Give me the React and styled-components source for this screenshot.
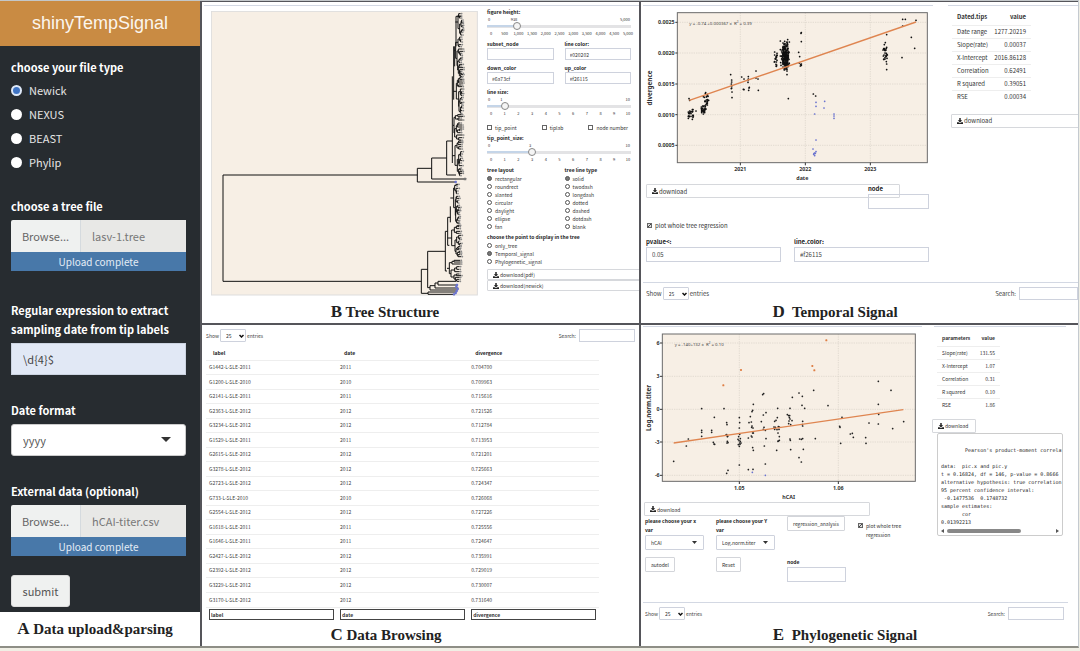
import React, { useState } from 'react';
import styled, { createGlobalStyle } from 'styled-components';

const uiFont = '"Noto Sans CJK SC", "Noto Sans", sans-serif';
const monoFont = '"DejaVu Sans Mono", monospace';

// small seeded generator so the dense parts of the plots are the same on each render
function makeRandom(seed) {
  let s = seed;
  return () => {
    s = (s * 16807) % 2147483647;
    return s / 2147483647;
  };
}

function cloud(seed, count, x0, x1, y0, y1) {
  const rnd = makeRandom(seed);
  return Array.from({ length: count }, () => [
    Math.round(x0 + rnd() * (x1 - x0)),
    Math.round(y0 + ((rnd() + rnd()) / 2) * (y1 - y0)),
  ]);
}

const temporalPoints = [
  ...cloud(11, 26, 145, 160, 318, 366),
  ...cloud(23, 26, 184, 196, 315, 346),
  ...cloud(37, 26, 192, 206, 276, 338),
  ...cloud(41, 20, 403, 411, 148, 204),
  ...cloud(59, 150, 429, 444, 120, 216),
  ...cloud(61, 60, 421, 448, 118, 210),
  ...cloud(73, 26, 729, 742, 132, 180),
  [147, 296], [149, 301], [168, 333], [190, 290], [197, 278], [272, 224], [275, 240], [275, 246], [274, 252],
  [275, 258], [275, 264], [274, 266], [276, 276], [276, 293], [305, 231], [312, 237], [310, 268], [312, 269],
  [325, 230], [325, 237], [324, 241], [324, 247], [328, 262], [326, 271], [348, 213], [348, 234], [354, 237],
  [355, 271], [327, 264], [441, 224], [445, 296], [484, 98], [483, 100], [484, 125], [476, 157], [479, 170],
  [478, 189], [482, 194], [484, 196], [481, 198], [484, 192], [520, 282], [527, 288], [740, 104], [736, 128],
  [739, 185], [740, 192], [740, 209], [788, 58], [796, 58], [788, 78], [828, 61], [814, 112], [824, 145], [786, 173],
];

const outlierPoints = [
  [528, 307], [554, 304], [528, 319], [552, 324], [524, 342], [582, 342], [582, 348], [582, 355], [528, 420],
  [519, 447], [528, 455], [524, 459], [521, 463], [524, 467], [526, 460], [522, 461],
];

const signalPoints = [
  [101, 412], [139, 366], [145, 345], [185, 254], [185, 319], [185, 325], [185, 337], [215, 319], [215, 325],
  [223, 280], [220, 355], [222, 360], [224, 361], [252, 254], [260, 296], [261, 302], [260, 332], [263, 337],
  [262, 352], [261, 357], [264, 356], [258, 333], [262, 338], [260, 448], [264, 439], [298, 281], [299, 296],
  [298, 312], [299, 331], [296, 338], [301, 344], [297, 350], [294, 346], [301, 352], [299, 357], [295, 362],
  [300, 361], [303, 357], [298, 367], [298, 423], [331, 278], [327, 296], [334, 294], [336, 263], [338, 259],
  [340, 241], [336, 306], [339, 312], [335, 310], [340, 327], [338, 327], [334, 336], [336, 339], [325, 342],
  [338, 371], [340, 379], [325, 437], [339, 436], [364, 293], [370, 273], [378, 266], [368, 212], [371, 209],
  [372, 310], [370, 316], [376, 319], [378, 344], [373, 366], [376, 420], [413, 253], [412, 281], [404, 292],
  [408, 289], [402, 309], [406, 310], [404, 316], [411, 317], [415, 308], [418, 309], [417, 316], [414, 327],
  [418, 338], [415, 351], [418, 349], [414, 352], [410, 379], [450, 253], [457, 220], [442, 272], [446, 275],
  [449, 275], [448, 281], [450, 285], [447, 291], [456, 290], [446, 299], [452, 302], [450, 345], [451, 349],
  [452, 377], [477, 207], [487, 217], [486, 244], [494, 253], [488, 292], [487, 302], [488, 306], [479, 345],
  [484, 346], [488, 344], [490, 376], [477, 401], [484, 414], [521, 199], [526, 344], [564, 245], [599, 307],
  [600, 310], [606, 280], [602, 358], [631, 330], [637, 328], [640, 340], [677, 341], [678, 358], [687, 297],
  [715, 172], [715, 241], [716, 271], [715, 300], [753, 199], [758, 314], [791, 293],
];

// phylogeny
function buildClade(seed, root, y0, y1, tipX) {
  const rnd = makeRandom(seed);
  const lines = [];
  const tips = [];
  const walk = (x, a, b) => {
    if (b - a < 9) {
      const y = Math.round((a + b) / 2);
      const end = Math.max(Math.round(tipX(y) - 4 - rnd() * 9), x + 1);
      lines.push(`M${x} ${y}H${end}`);
      tips.push([end + 3, y]);
      return y;
    }
    const cut = a + (b - a) * (0.28 + rnd() * 0.44);
    const left = tipX(a) - x;
    const next = Math.round(x + Math.max(1, left * (0.06 + rnd() * 0.26)));
    const top = walk(next, a, cut);
    const bottom = walk(next, cut, b);
    lines.push(`M${next} ${top}V${bottom}`);
    const mid = Math.round((top + bottom) / 2);
    lines.push(`M${x} ${mid}H${next}`);
    return mid;
  };
  walk(root, y0, y1);
  return { d: lines.join(''), tips };
}

const clades = [
  buildClade(7, 766, 38, 110, () => 793),
  buildClade(17, 763, 108, 235, () => 793),
  buildClade(29, 760, 232, 345, () => 793),
  buildClade(31, 759, 342, 425, () => 793),
  buildClade(43, 757, 422, 532, () => 791),
  buildClade(53, 751, 552, 675, (y) => 782 + (y - 552) / 40),
  buildClade(67, 743, 675, 775, () => 788),
  buildClade(71, 741, 778, 848, () => 788),
];

const trunk =
  'M69 526V845M69 526H652M69 845H664M652 506V547M652 506H695M652 547H766M695 475V538M695 475H740M695 538H792' +
  'M740 424V526M740 424H757M740 526H768M757 230V490M761 140V300M764 140V200M768 50V140M768 50H785' +
  'M664 809V881M664 809H683M664 881H684M683 755V864M683 755H736M683 864H690M684 877V884M684 877H768M684 884H764' +
  'M690 858V871M690 858H705M690 871H772M705 850V865M705 850H714M705 865H775M714 845V856M714 845H768M714 856H768' +
  'M736 695V814M736 695H743M736 814H741M743 653V737M743 653H751M743 737H748M751 620V668';

const tableRows = [
  ['G1442-L-SLE-2011', '2011', '0.704700'],
  ['G1200-L-SLE-2010', '2010', '0.709963'],
  ['G2141-L-SLE-2011', '2011', '0.715616'],
  ['G2363-L-SLE-2012', '2012', '0.721526'],
  ['G3234-L-SLE-2012', '2012', '0.712784'],
  ['G1529-L-SLE-2011', '2011', '0.713953'],
  ['G2615-L-SLE-2012', '2012', '0.721201'],
  ['G3278-L-SLE-2012', '2012', '0.725663'],
  ['G2723-L-SLE-2012', '2012', '0.724347'],
  ['G733-L-SLE-2010', '2010', '0.726068'],
  ['G2554-L-SLE-2012', '2012', '0.727226'],
  ['G1618-L-SLE-2011', '2011', '0.725556'],
  ['G1646-L-SLE-2011', '2011', '0.724647'],
  ['G2427-L-SLE-2012', '2012', '0.735991'],
  ['G2392-L-SLE-2012', '2012', '0.729019'],
  ['G3229-L-SLE-2012', '2012', '0.730007'],
  ['G3170-L-SLE-2012', '2012', '0.731640'],
];

const temporalStats = [
  ['Date range', '1277.20219'],
  ['Slope(rate)', '0.00037'],
  ['X-Intercept', '2016.86128'],
  ['Correlation', '0.62491'],
  ['R squared', '0.39051'],
  ['RSE', '0.00034'],
];

const signalStats = [
  ['Slope(rate)', '131.55'],
  ['X-Intercept', '1.07'],
  ['Correlation', '0.31'],
  ['R squared', '0.10'],
  ['RSE', '1.86'],
];

const testOutput = `
        Pearson's product-moment correlation

data:  pic.x and pic.y
t = 0.16824, df = 146, p-value = 0.8666
alternative hypothesis: true correlation is
95 percent confidence interval:
 -0.1477536  0.1748732
sample estimates:
       cor
0.01392213`;

function DownloadIcon() {
  return (
    <svg width="6" height="6" viewBox="0 0 16 16" aria-hidden="true">
      <path d="M6 0h4v6h4L8 12 2 6h4zM0 11h4l4 3 4-3h4v5H0z" fill="#222" />
    </svg>
  );
}

function DownloadButton({ label = 'download', ...props }) {
  return (
    <Download type="button" {...props}>
      <DownloadIcon />
      {label}
    </Download>
  );
}

function Slider({ id, label, max, start, ticks, maxLabel }) {
  const [value, setValue] = useState(start);
  const percent = (value / max) * 100;
  return (
    <SliderBox>
      <SmallLabel htmlFor={id}>{label}</SmallLabel>
      <SliderNumbers>
        <span>0</span>
        <SliderValue style={{ left: `${percent}%` }}>{value}</SliderValue>
        <span>{maxLabel}</span>
      </SliderNumbers>
      <Range
        id={id}
        type="range"
        min="0"
        max={max}
        value={value}
        onChange={(e) => setValue(Number(e.target.value))}
        style={{ backgroundSize: `${percent}% 2px, 100% 3px` }}
      />
      <Ticks>
        {ticks.map((tick) => (
          <span key={tick}>{tick}</span>
        ))}
      </Ticks>
    </SliderBox>
  );
}

function RadioList({ title, name, options, initial }) {
  const [picked, setPicked] = useState(initial);
  return (
    <PlainFieldset>
      <SmallLegend>{title}</SmallLegend>
      {options.map((option) => (
        <TinyChoice key={option}>
          <TinyRadio type="radio" name={name} checked={picked === option} onChange={() => setPicked(option)} />
          {option}
        </TinyChoice>
      ))}
    </PlainFieldset>
  );
}

function TinyField({ id, label, value = '' }) {
  return (
    <Field>
      <SmallLabel htmlFor={id}>{label}</SmallLabel>
      <TinyInput id={id} defaultValue={value} />
    </Field>
  );
}

function FormField({ id, label, value = '', small }) {
  return (
    <Field>
      <FormLabel htmlFor={id} $small={small}>{label}</FormLabel>
      <FormInput id={id} defaultValue={value} />
    </Field>
  );
}

function TableTools({ name, left = 4, right = 0, large }) {
  return (
    <Tools $left={left} $right={right} $large={large}>
      <Entries>
        Show
        <Picker $small>
          <select aria-label={`${name} entries`} defaultValue="25">
            <option>10</option>
            <option>25</option>
            <option>50</option>
          </select>
          <svg width="5" height="4" viewBox="0 0 10 8" aria-hidden="true">
            <path d="M1 2l4 4 4-4" fill="none" stroke="#111" strokeWidth="3" />
          </svg>
        </Picker>
        entries
      </Entries>
      <Entries $search>
        Search:
        <SearchInput type="search" aria-label={`${name} search`} $large={large} />
      </Entries>
    </Tools>
  );
}

function Stats({ head, rows, small }) {
  return (
    <StatsTable $small={small}>
      <thead>
        <tr>
          <th>{head}</th>
          <th>value</th>
        </tr>
      </thead>
      <tbody>
        {rows.map(([name, value]) => (
          <tr key={name}>
            <td>{name}</td>
            <td>{value}</td>
          </tr>
        ))}
      </tbody>
    </StatsTable>
  );
}

function Dots({ points, color, size = 5 }) {
  return (
    <g fill={color}>
      {points.map(([x, y], i) => (
        <rect key={i} x={x - size / 2} y={y - size / 2} width={size} height={size} rx="2" />
      ))}
    </g>
  );
}

function TreeChart() {
  return (
    <svg width="267" height="285" viewBox="33 34 801 855" role="img" aria-label="phylogenetic tree">
      <rect x="34" y="35" width="798" height="851" fill="#f7efe5" stroke="#dddddd" strokeWidth="3" />
      <path d={trunk} fill="none" stroke="#111" strokeWidth="3" />
      <g fill="none" stroke="#111" strokeWidth="3">
        {clades.map((clade, i) => (
          <path key={i} d={clade.d} />
        ))}
      </g>
      {clades.map((clade, i) => (
        <Dots key={i} points={clade.tips} color="#8a8a8a" size={5} />
      ))}
      <Dots points={[[795, 538]]} color="#777" size={8} />
      <Dots
        points={[[767, 547], [771, 856], [769, 862], [773, 868], [770, 874], [767, 880], [762, 884]]}
        color="#6a73cf"
        size={7}
      />
    </svg>
  );
}

function TemporalChart() {
  return (
    <svg width="290" height="174" viewBox="9 27 870 522" role="img" aria-label="divergence by date">
      <rect x="112" y="38" width="750" height="450" fill="#f7efe5" />
      <g stroke="#d9d2c8" strokeWidth="2" strokeDasharray="4 3">
        {[67, 159, 252, 344, 436].map((y) => (
          <line key={y} x1="112" x2="862" y1={y} y2={y} />
        ))}
        {[301, 496, 691].map((x) => (
          <line key={x} x1={x} x2={x} y1="38" y2="488" />
        ))}
      </g>
      <Dots points={temporalPoints} color="#111" />
      <Dots points={outlierPoints} color="#6a73cf" />
      <line x1="148" y1="301" x2="828" y2="66" stroke="#df8550" strokeWidth="4" />
      <rect x="112" y="38" width="750" height="450" fill="none" stroke="#6b6b6b" strokeWidth="3" />
      <AxisText textAnchor="end">
        {[['0.0025', 67], ['0.0020', 159], ['0.0015', 252], ['0.0010', 344], ['0.0005', 436]].map(([t, y]) => (
          <text key={t} x="104" y={y + 6}>{t}</text>
        ))}
      </AxisText>
      <AxisText textAnchor="middle">
        {[['2021', 301], ['2022', 496], ['2023', 691]].map(([t, x]) => (
          <text key={t} x={x} y="514">{t}</text>
        ))}
        <text x="487" y="540">date</text>
        <SideTitle transform="translate(37 264) rotate(-90)">divergence</SideTitle>
      </AxisText>
      <path
        d="M106 67h6M106 159h6M106 252h6M106 344h6M106 436h6M301 488v8M496 488v8M691 488v8"
        stroke="#333"
        strokeWidth="3"
      />
      <Formula x="148" y="75">
        y = -0.74 +0.000367 x &#160;R<tspan dy="-6" fontSize="9">2</tspan><tspan dy="6"> = 0.39</tspan>
      </Formula>
    </svg>
  );
}

function SignalChart() {
  return (
    <svg width="278" height="174" viewBox="12 12 834 522" role="img" aria-label="Log.norm.titer by hCAI">
      <rect x="67" y="30" width="759" height="442" fill="#f7efe5" />
      <g stroke="#d9d2c8" strokeWidth="2" strokeDasharray="4 3">
        {[57, 157, 256, 354, 454].map((y) => (
          <line key={y} x1="67" x2="826" y1={y} y2={y} />
        ))}
        {[298, 595].map((x) => (
          <line key={x} x1={x} x2={x} y1="30" y2="472" />
        ))}
      </g>
      <Dots points={signalPoints} color="#222" />
      <Dots points={[[303, 138], [250, 184], [517, 126], [523, 139], [559, 49]]} color="#df7f45" size={6} />
      <Dots points={[[337, 445], [376, 454]]} color="#6a73cf" />
      <line x1="101" y1="357" x2="790" y2="257" stroke="#df8550" strokeWidth="4" />
      <rect x="67" y="30" width="759" height="442" fill="none" stroke="#6b6b6b" strokeWidth="3" />
      <AxisText textAnchor="end">
        {[['6', 57], ['3', 157], ['0', 256], ['-3', 354], ['-6', 454]].map(([t, y]) => (
          <text key={t} x="59" y={y + 6}>{t}</text>
        ))}
      </AxisText>
      <AxisText textAnchor="middle">
        <text x="298" y="498">1.05</text>
        <text x="595" y="498">1.06</text>
        <text x="446" y="524">hCAI</text>
        <SideTitle transform="translate(34 252) rotate(-90)">Log.norm.titer</SideTitle>
      </AxisText>
      <path d="M60 57h7M60 157h7M60 256h7M60 354h7M60 454h7M298 472v8M595 472v8" stroke="#333" strokeWidth="3" />
      <Formula x="104" y="66">
        y = -140+132 x &#160;R<tspan dy="-6" fontSize="9">2</tspan><tspan dy="6"> = 0.10</tspan>
      </Formula>
    </svg>
  );
}

function FilePicker({ id, label, file, gap }) {
  return (
    <Group $gap={gap}>
      <SideLabel htmlFor={id}>{label}</SideLabel>
      <FileRow>
        <Browse type="button">Browse...</Browse>
        <FileName id={id} value={file} readOnly />
      </FileRow>
      <Progress>Upload complete</Progress>
    </Group>
  );
}

function Sidebar() {
  const [type, setType] = useState('Newick');
  return (
    <Side>
      <Brand>shinyTempSignal</Brand>
      <SideForm onSubmit={(e) => e.preventDefault()}>
        <PlainFieldset>
          <SideLegend>choose your file type</SideLegend>
          {['Newick', 'NEXUS', 'BEAST', 'Phylip'].map((name) => (
            <Choice key={name}>
              <Radio type="radio" name="filetype" checked={type === name} onChange={() => setType(name)} />
              {name}
            </Choice>
          ))}
        </PlainFieldset>
        <FilePicker id="treefile" label="choose a tree file" file="lasv-1.tree" gap={23} />
        <Group $gap={30}>
          <SideLabel htmlFor="regexp">Regular expression to extract sampling date from tip labels</SideLabel>
          <SideInput id="regexp" defaultValue="\d{4}$" />
        </Group>
        <Group $gap={26}>
          <SideLabel htmlFor="format">Date format</SideLabel>
          <SidePicker>
            <select id="format" defaultValue="yyyy">
              <option>yyyy</option>
              <option>yyyy-mm-dd</option>
            </select>
            <svg width="10" height="6" viewBox="0 0 10 6" aria-hidden="true">
              <path d="M0 0h10L5 5z" fill="#333" />
            </svg>
          </SidePicker>
        </Group>
        <FilePicker id="external" label="External data (optional)" file="hCAI-titer.csv" gap={26} />
        <Submit type="submit">submit</Submit>
      </SideForm>
      <Caption $shift={10} $tall>
        <b>A</b> Data upload&amp;parsing
      </Caption>
    </Side>
  );
}

const unit = ['0', '1', '2', '3', '4', '5', '6', '7', '8', '9', '10'];
const heights = ['0', '500', '1,000', '1,500', '2,000', '2,500', '3,000', '3,500', '4,000', '4,500', '5,000'];

function TreePanel() {
  return (
    <Panel $top={3}>
      <Rule />
      <TreeBody>
        <Figure>
          <TreeChart />
        </Figure>
        <Controls>
          <Slider id="height" label="figure height:" max={5000} start={938} ticks={heights} maxLabel="5,000" />
          <Pair>
            <TinyField id="subset" label="subset_node" />
            <TinyField id="linecolor" label="line color:" value="#020202" />
            <TinyField id="down" label="down_color" value="#6a73cf" />
            <TinyField id="up" label="up_color" value="#f26115" />
          </Pair>
          <Slider id="linesize" label="line size:" max={10} start={1} ticks={unit} maxLabel="10" />
          <Checks>
            {['tip_point', 'tiplab', 'node number'].map((name) => (
              <TinyChoice key={name}>
                <TinyCheck type="checkbox" />
                {name}
              </TinyChoice>
            ))}
          </Checks>
          <Slider id="pointsize" label="tip_point_size:" max={10} start={3} ticks={unit} maxLabel="10" />
          <Pair $spaced>
            <RadioList
              title="tree layout"
              name="layout"
              initial="rectangular"
              options={['rectangular', 'roundrect', 'slanted', 'circular', 'daylight', 'ellipse', 'fan']}
            />
            <RadioList
              title="tree line type"
              name="linetype"
              initial="solid"
              options={['solid', 'twodash', 'longdash', 'dotted', 'dashed', 'dotdash', 'blank']}
            />
          </Pair>
          <RadioList
            title="choose the point to display in the tree"
            name="points"
            initial="Temporal_signal"
            options={['only_tree', 'Temporal_signal', 'Phylogenetic_signal']}
          />
          <Downloads>
            <DownloadButton label="download(pdf)" $flat />
            <DownloadButton label="download(newick)" $flat />
          </Downloads>
        </Controls>
      </TreeBody>
      <Caption $shift={71}>
        <b>B</b> Tree Structure
      </Caption>
    </Panel>
  );
}

function TemporalPanel() {
  return (
    <Panel $top={3}>
      <Split>
        <Rule />
        <Rule />
        <Main>
          <TemporalChart />
          <NodeRow>
            <DownloadButton />
            <NodeField>
              <FormLabel htmlFor="node-d">node</FormLabel>
              <FormInput id="node-d" />
            </NodeField>
          </NodeRow>
          <FormCheck>
            <TinyCheck type="checkbox" defaultChecked />
            plot whole tree regression
          </FormCheck>
          <FormPair>
            <FormField id="pvalue" label="pvalue<:" value="0.05" />
            <FormField id="line-color-d" label="line.color:" value="#f26115" />
          </FormPair>
        </Main>
        <Aside>
          <Stats head="Dated.tips" rows={temporalStats} />
          <DownloadButton $bleed />
        </Aside>
      </Split>
      <Rule />
      <TableTools name="temporal" left={5} large />
      <Caption $shift={49}>
        <b>D</b>&nbsp; Temporal Signal
      </Caption>
    </Panel>
  );
}

function DataPanel() {
  return (
    <Panel>
      <TableTools name="data" right={4} />
      <DataTable>
        <thead>
          <tr>
            <th>label</th>
            <th>date</th>
            <th>divergence</th>
          </tr>
        </thead>
        <tbody>
          {tableRows.map((row) => (
            <tr key={row[0]}>
              {row.map((cell) => (
                <td key={cell}>{cell}</td>
              ))}
            </tr>
          ))}
        </tbody>
        <tfoot>
          <tr>
            {['label', 'date', 'divergence'].map((name) => (
              <td key={name}>
                <FilterInput placeholder={name} aria-label={`filter ${name}`} />
              </td>
            ))}
          </tr>
        </tfoot>
      </DataTable>
      <Caption $shift={69}>
        <b>C</b> Data Browsing
      </Caption>
    </Panel>
  );
}

function VarPicker({ id, label, value }) {
  return (
    <Field>
      <FormLabel htmlFor={id} $small>{label}</FormLabel>
      <Picker>
        <select id={id} defaultValue={value}>
          <option>{value}</option>
        </select>
        <svg width="5" height="3" viewBox="0 0 10 6" aria-hidden="true">
          <path d="M0 0h10L5 6z" fill="#333" />
        </svg>
      </Picker>
    </Field>
  );
}

function SignalPanel() {
  return (
    <Panel $top={1}>
      <Split $narrow>
        <Rule />
        <Rule />
        <Main $narrow>
          <SignalChart />
          <DownloadButton $wide />
          <SignalForm>
            <FormColumn>
              <VarPicker id="xvar" label="please choose your x var" value="hCAI" />
              <FormButton type="button">autodel</FormButton>
            </FormColumn>
            <FormColumn>
              <VarPicker id="yvar" label="please choose your Y var" value="Log.norm.titer" />
              <FormButton type="button">Reset</FormButton>
            </FormColumn>
            <FormColumn $spread>
              <FormButton type="button">regression_analysis</FormButton>
              <FormField id="node-e" label="node" small />
            </FormColumn>
            <FormCheck $wrap>
              <TinyCheck type="checkbox" defaultChecked />
              plot whole tree regression
            </FormCheck>
          </SignalForm>
        </Main>
        <Aside $narrow>
          <Stats head="parameters" rows={signalStats} small />
          <DownloadButton $short />
          <Output>
            <pre>{testOutput}</pre>
            <ScrollBar aria-hidden="true">
              <svg width="3" height="4" viewBox="0 0 3 4"><path d="M3 0v4L0 2z" fill="#555" /></svg>
              <ScrollTrack>
                <ScrollThumb />
              </ScrollTrack>
              <svg width="3" height="4" viewBox="0 0 3 4"><path d="M0 0v4l3-2z" fill="#555" /></svg>
            </ScrollBar>
          </Output>
        </Aside>
      </Split>
      <Rule $inset />
      <TableTools name="signal" right={14} />
      <Caption $shift={29}>
        <b>E</b>&nbsp; Phylogenetic Signal
      </Caption>
    </Panel>
  );
}

function App() {
  return (
    <>
      <GlobalStyle />
      <Page>
        <Sidebar />
        <Panels>
          <TreePanel />
          <TemporalPanel />
          <DataPanel />
          <SignalPanel />
        </Panels>
      </Page>
    </>
  );
}

const GlobalStyle = createGlobalStyle`
  * {
    box-sizing: border-box;
  }

  body {
    margin: 0;
    background: #f0efe5;
    font-family: ${uiFont};
    color: #333;
  }

  button, input, select {
    font-family: inherit;
    margin: 0;
  }

  svg {
    display: block;
    flex: none;
  }
`;

const Page = styled.div`
  display: grid;
  grid-template-columns: 200px minmax(0, 1fr);
  margin-right: 1px;
  border-top: 1px solid #c3c7c9;
  border-right: 1px solid #c4cad0;
  border-bottom: 2px solid #8e8e86;
  background: #fff;
`;

const Panels = styled.main`
  display: grid;
  grid-template-columns: repeat(2, minmax(0, 1fr));
  grid-template-rows: repeat(2, minmax(321px, auto));
  gap: 2px;
  padding-top: 1px;
  padding-left: 2px;
  background: #55555a;
`;

const Panel = styled.section`
  display: flex;
  flex-direction: column;
  min-width: 0;
  padding-top: ${(p) => p.$top || 0}px;
  background: #fff;
  overflow: hidden;
`;

const Caption = styled.h2`
  margin: auto 0 0;
  padding-right: ${(p) => p.$shift}px;
  background: #fff;
  color: #222;
  font: bold 15px/${(p) => (p.$tall ? 34 : 21)}px "Liberation Serif", serif;
  text-align: center;
  white-space: nowrap;

  b {
    font-size: 17px;
  }
`;

const Rule = styled.hr`
  width: auto;
  height: 1px;
  margin: 0 ${(p) => (p.$inset ? 10 : 0)}px 0 2px;
  border: 0;
  background: #d3d8e3;
`;

const Side = styled.aside`
  display: flex;
  flex-direction: column;
  background: #272c30;
`;

const Brand = styled.h1`
  margin: 0;
  background: #c98b43;
  color: #fbf6ee;
  font: normal 18px/45px "Liberation Sans", sans-serif;
  text-align: center;
`;

const SideForm = styled.form`
  display: flex;
  flex-direction: column;
  align-items: stretch;
  padding: 12px 14px 5px 11px;
`;

const PlainFieldset = styled.fieldset`
  min-width: 0;
  margin: 0;
  padding: 0;
  border: 0;
`;

const SideLegend = styled.legend`
  padding: 0;
  color: #fff;
  font-size: 11px;
  font-weight: bold;
  line-height: 19px;
  margin-bottom: 1px;
`;

const SideLabel = styled.label`
  display: block;
  margin-bottom: 4px;
  color: #fff;
  font-size: 11px;
  font-weight: bold;
  line-height: 19px;
`;

const Choice = styled.label`
  display: flex;
  align-items: center;
  gap: 7px;
  height: 24px;
  color: #e6e6e6;
  font-size: 11px;
`;

const Radio = styled.input`
  appearance: none;
  width: 11px;
  height: 11px;
  border-radius: 50%;
  background: #fff;

  &:checked {
    border: 2px solid #dfe9f8;
    background: #3f74c4;
  }
`;

const Group = styled.div`
  display: flex;
  flex-direction: column;
  margin-top: ${(p) => p.$gap}px;
`;

const FileRow = styled.div`
  display: flex;
  height: 32px;
`;

const Browse = styled.button`
  flex: none;
  width: 70px;
  padding: 0;
  border: 0;
  border-right: 1px solid #d5dade;
  border-radius: 2px 0 0 0;
  background: #eff1f0;
  color: #666;
  font-size: 11px;
`;

const FileName = styled.input`
  flex: 1;
  min-width: 0;
  padding: 0 11px;
  border: 0;
  background: #e8e8e6;
  color: #777;
  font-size: 11px;
`;

const Progress = styled.div`
  background: #4878a9;
  color: #e4ecf5;
  font-size: 10px;
  line-height: 19px;
  text-align: center;
`;

const SideInput = styled.input`
  height: 32px;
  padding: 0 11px;
  border: 1px solid #cbd3e0;
  background: #e1e8f5;
  color: #444;
  font-size: 11px;
`;

const SidePicker = styled.div`
  display: grid;
  align-items: center;

  > * {
    grid-area: 1 / 1;
  }

  select {
    appearance: none;
    height: 32px;
    padding: 0 11px;
    border: 1px solid #ccc;
    border-radius: 3px;
    background: #fff;
    color: #555;
    font-size: 11px;
  }

  svg {
    justify-self: end;
    margin-right: 15px;
    pointer-events: none;
  }
`;

const Submit = styled.button`
  align-self: flex-start;
  width: 59px;
  height: 32px;
  padding: 0;
  margin-top: 19px;
  border: 1px solid #ddd;
  border-radius: 3px;
  background: #eff1f0;
  color: #555;
  font-size: 11px;
`;

const TreeBody = styled.div`
  display: flex;
  gap: 9px;
  padding: 2px 8px 0 9px;
`;

const Figure = styled.div`
  padding-top: 3px;
`;

const Controls = styled.div`
  flex: 1;
  min-width: 0;
`;

const SmallLabel = styled.label`
  display: block;
  color: #222;
  font-size: 5px;
  font-weight: bold;
  line-height: 8px;
`;

const SmallLegend = styled.legend`
  padding: 0;
  color: #222;
  font-size: 5px;
  font-weight: bold;
  line-height: 8px;
`;

const SliderBox = styled.div`
  padding-bottom: 4px;
`;

const SliderNumbers = styled.div`
  position: relative;
  display: flex;
  justify-content: space-between;
  padding: 0 1px;
  font-size: 4px;
  line-height: 6px;
`;

const SliderValue = styled.span`
  position: absolute;
  transform: translateX(-50%);
`;

const Range = styled.input`
  appearance: none;
  display: block;
  width: 100%;
  height: 8px;
  background:
    linear-gradient(#c5d5e8, #c5d5e8) left center no-repeat,
    linear-gradient(#e3e3e5, #e3e3e5) left center no-repeat;

  &::-webkit-slider-thumb {
    appearance: none;
    width: 8px;
    height: 8px;
    border: 1px solid #888;
    border-radius: 50%;
    background: #f5f5f5;
  }
`;

const Ticks = styled.div`
  display: flex;
  justify-content: space-between;
  padding: 0 3px 0 4px;
  font-size: 4px;
  line-height: 6px;

  span {
    display: flex;
    justify-content: center;
    width: 0;
  }
`;

const Pair = styled.div`
  display: grid;
  grid-template-columns: 1fr 1fr;
  column-gap: 11px;
  padding-bottom: ${(p) => (p.$spaced ? 3 : 0)}px;
`;

const Field = styled.div`
  display: flex;
  flex-direction: column;
  min-width: 0;
  padding-bottom: 4px;
`;

const TinyInput = styled.input`
  width: 100%;
  height: 12px;
  padding: 0 4px;
  border: 1px solid #ced2dd;
  color: #333;
  font-size: 5px;
`;

const TinyChoice = styled.label`
  display: flex;
  align-items: center;
  gap: 3px;
  height: 8px;
  color: #333;
  font-size: 5px;
  white-space: nowrap;
`;

const TinyRadio = styled.input`
  appearance: none;
  flex: none;
  width: 5px;
  height: 5px;
  border: 1px solid #555;
  border-radius: 50%;

  &:checked {
    background: #777;
  }
`;

const TinyCheck = styled.input`
  appearance: none;
  flex: none;
  width: 5px;
  height: 5px;
  border: 1px solid #666;

  &:checked {
    background: linear-gradient(135deg, #ddd 40%, #444 40%, #444 60%, #ddd 60%);
  }
`;

const Checks = styled.div`
  display: flex;
  justify-content: space-between;
  padding: 3px 3px 3px 0;
`;

const Downloads = styled.div`
  display: grid;
  margin: 4px -9px 0 0;
`;

const Download = styled.button`
  display: flex;
  align-items: center;
  gap: 1px;
  flex: none;
  width: ${(p) => (p.$short ? '44px' : p.$wide ? '226px' : p.$flat ? '100%' : p.$bleed ? '130px' : '254px')};
  height: ${(p) => (p.$flat ? 11 : 14)}px;
  padding: 0 0 0 5px;
  border: 1px solid #d6d8dc;
  border-radius: 1px;
  background: #fff;
  color: #333;
  font-size: ${(p) => (p.$flat || p.$wide || p.$short ? 5 : 6)}px;
`;

const Split = styled.div`
  display: grid;
  grid-template-columns: ${(p) => (p.$narrow ? '281px 134px' : '292px minmax(0, 1fr)')};
  column-gap: ${(p) => (p.$narrow ? 10 : 13)}px;
`;

const Main = styled.div`
  min-width: 0;
  padding: ${(p) => (p.$narrow ? '1px 0 0 3px' : '3px 0 0 2px')};
`;

const Aside = styled.div`
  min-width: 0;
  padding: ${(p) => (p.$narrow ? '4px 0 0 0' : '4px 0 0 5px')};
`;

const AxisText = styled.g`
  fill: #333;
  font: bold 16px "Noto Sans", sans-serif;
`;

const SideTitle = styled.text`
  font-size: 19px;
`;

const Formula = styled.text`
  fill: #444;
  font: 13px "Noto Sans", sans-serif;
`;

const StatsTable = styled.table`
  width: ${(p) => (p.$small ? 63 : 79)}px;
  margin: 0 0 ${(p) => (p.$small ? 7 : 10)}px ${(p) => (p.$small ? 5 : 1)}px;
  border-collapse: collapse;
  color: #333;
  font-size: ${(p) => (p.$small ? 5 : 6)}px;

  th, td {
    height: 13px;
    padding: 0 5px;
    border-bottom: 1px solid #eeeeee;
    line-height: 12px;
    text-align: left;
    white-space: nowrap;
  }

  th {
    height: 15px;
  }

  th:last-child, td:last-child {
    padding-left: 0;
    text-align: right;
  }

  tr:last-child td {
    border-color: transparent;
  }
`;

const NodeRow = styled.div`
  display: flex;
  align-items: flex-start;
  margin-left: 3px;
  padding-top: 1px;
`;

const NodeField = styled.div`
  width: 61px;
  margin: 0 0 0 -32px;
`;

const FormLabel = styled.label`
  display: block;
  margin-bottom: 1px;
  color: #222;
  font-size: ${(p) => (p.$small ? 5 : 6)}px;
  font-weight: bold;
  line-height: 9px;
`;

const FormInput = styled.input`
  display: block;
  width: 100%;
  height: 15px;
  padding: 0 5px;
  border: 1px solid #ced2dd;
  background: transparent;
  color: #444;
  font-size: 6px;
`;

const FormCheck = styled.label`
  display: flex;
  align-items: ${(p) => (p.$wrap ? 'baseline' : 'center')};
  gap: 3px;
  width: ${(p) => (p.$wrap ? '50px' : 'auto')};
  margin: ${(p) => (p.$wrap ? '5px 0 0' : '12px 0 7px 4px')};
  color: #333;
  font-size: ${(p) => (p.$wrap ? 5 : 6)}px;
  line-height: 9px;
`;

const FormPair = styled.div`
  display: grid;
  grid-template-columns: 1fr 1fr;
  gap: 13px;
  margin: 0 4px 16px 3px;
`;

const Entries = styled.div`
  display: flex;
  align-items: center;
  gap: ${(p) => (p.$search ? 3 : 1)}px;
  color: #444;
`;

const Tools = styled.div`
  display: flex;
  justify-content: space-between;
  padding: 4px ${(p) => p.$right}px 1px ${(p) => p.$left}px;
  font-size: ${(p) => (p.$large ? 6 : 5)}px;
`;

const Picker = styled.div`
  display: grid;
  align-items: center;
  width: ${(p) => (p.$small ? '26px' : '59px')};

  > * {
    grid-area: 1 / 1;
  }

  select {
    appearance: none;
    width: 100%;
    height: ${(p) => (p.$small ? 13 : 15)}px;
    padding: 0 5px;
    border: 1px solid #ced2dd;
    border-radius: 1px;
    background: #fff;
    color: #333;
    font-size: 5px;
  }

  svg {
    justify-self: end;
    margin-right: ${(p) => (p.$small ? 2 : 7)}px;
    pointer-events: none;
  }
`;

const SearchInput = styled.input`
  appearance: none;
  width: ${(p) => (p.$large ? 59 : 56)}px;
  height: 13px;
  padding: 0 4px;
  border: 1px solid #ced2dd;
  font-size: 6px;
`;

const DataTable = styled.table`
  width: 90%;
  height: 275px;
  margin: 3px 0 0 4px;
  border-collapse: collapse;
  table-layout: fixed;
  color: #444;
  font-size: 5px;

  th, td {
    padding: 0 3px;
    border-bottom: 1px solid #eeeeee;
    line-height: 8px;
    text-align: left;
  }

  th {
    height: 14px;
    padding-left: 7px;
    color: #222;
  }

  tbody td {
    height: 13px;
  }

  tfoot td {
    height: 14px;
    border: 0;
  }
`;

const FilterInput = styled.input`
  display: block;
  width: 100%;
  height: 11px;
  padding: 0 1px;
  border: 1px solid #444;
  font-size: 5px;
  font-weight: bold;

  &::placeholder {
    color: #333;
  }
`;

const SignalForm = styled.div`
  display: grid;
  grid-template-columns: 59px 59px 59px 1fr;
  column-gap: 12px;
  margin: 0 0 16px 1px;
`;

const FormColumn = styled.div`
  display: flex;
  flex-direction: column;
  align-items: flex-start;
  gap: ${(p) => (p.$spread ? 26 : 3)}px;
`;

const FormButton = styled.button`
  height: 15px;
  padding: 0 5px;
  border: 1px solid #d3d5da;
  border-radius: 1px;
  background: #fff;
  color: #333;
  font-size: 5px;
`;

const Output = styled.div`
  width: 126px;
  margin-left: 5px;
  padding: 4px 3px 2px;
  border: 1px solid #ccc;
  border-radius: 2px;
  overflow: hidden;

  pre {
    margin: 0 -3px 3px 0;
    color: #222;
    font: 5px/8px ${monoFont};
    overflow: hidden;
  }
`;

const ScrollBar = styled.div`
  display: flex;
  align-items: center;
  gap: 3px;
`;

const ScrollTrack = styled.div`
  flex: 1;
`;

const ScrollThumb = styled.div`
  width: 70%;
  height: 4px;
  border-radius: 2px;
  background: #888;
`;

export default App;
